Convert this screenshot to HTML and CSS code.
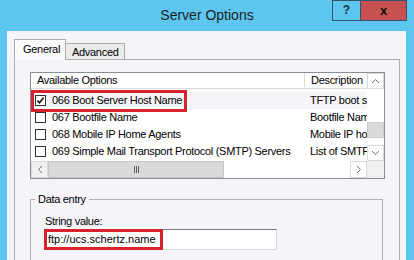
FILE: index.html
```html
<!DOCTYPE html>
<html lang="en">
<head>
  <meta charset="UTF-8">
  <title>Server Options</title>
  <link rel="stylesheet" href="styles.css">
</head>
<body>

  <div class="titlebar">
    <span></span>
    <div class="title">Server Options</div>
    <div class="controls">
      <span class="btn-help">?</span>
      <span class="btn-close">x</span>
    </div>
  </div>

  <div class="client">
    <div class="tabs">
      <div class="tab active">General</div>
      <div class="tab">Advanced</div>
    </div>

    <div class="panel">
      <div class="list">
        <div class="list-main">
          <div class="list-head">
            <div class="col-name">Available Options</div>
            <div class="col-desc">Description</div>
          </div>
          <div class="rows">
            <div class="row current">
              <div class="col-name">
                <span class="mark-row">
                  <span class="check on">
                    <svg width="9" height="9" viewBox="0 0 9 9"><polyline points="1.5,4.5 3.5,6.8 7.6,1.8" fill="none" stroke="#111" stroke-width="1.6"/></svg>
                  </span>
                  066 Boot Server Host Name
                </span>
              </div>
              <div class="col-desc">TFTP boot server host name</div>
            </div>
            <div class="row">
              <div class="col-name"><span class="check"></span>067 Bootfile Name</div>
              <div class="col-desc">Bootfile Name</div>
            </div>
            <div class="row">
              <div class="col-name"><span class="check"></span>068 Mobile IP Home Agents</div>
              <div class="col-desc">Mobile IP home agents</div>
            </div>
            <div class="row">
              <div class="col-name"><span class="check"></span>069 Simple Mail Transport Protocol (SMTP) Servers</div>
              <div class="col-desc">List of SMTP servers</div>
            </div>
          </div>
        </div>

        <div class="vscroll">
          <div class="sb-btn">
            <svg width="9" height="6" viewBox="0 0 9 6"><polyline points="1,5 4.5,1.5 8,5" fill="none" stroke="#707070" stroke-width="1"/></svg>
          </div>
          <div class="vtrack"><div class="vthumb"></div></div>
          <div class="sb-btn">
            <svg width="9" height="6" viewBox="0 0 9 6"><polyline points="1,1 4.5,4.5 8,1" fill="none" stroke="#707070" stroke-width="1"/></svg>
          </div>
        </div>

        <div class="hscroll">
          <div class="sb-btn left">
            <svg width="6" height="9" viewBox="0 0 6 9"><polyline points="5,1 1.5,4.5 5,8" fill="none" stroke="#707070" stroke-width="1"/></svg>
          </div>
          <div class="hthumb">
            <svg width="7" height="7" viewBox="0 0 7 7"><path d="M1.5 0v7M3.5 0v7M5.5 0v7" stroke="#606060" stroke-width="1"/></svg>
          </div>
          <div class="htrack"></div>
          <div class="sb-btn right">
            <svg width="6" height="9" viewBox="0 0 6 9"><polyline points="1,1 4.5,4.5 1,8" fill="none" stroke="#707070" stroke-width="1"/></svg>
          </div>
        </div>
        <div class="corner"></div>
      </div>

      <fieldset class="group">
        <legend>Data entry</legend>
        <div class="group-body">
          <div class="field-label">String value:</div>
          <div class="textbox"><span class="mark-value">ftp://ucs.schertz.name</span></div>
        </div>
      </fieldset>
    </div>
  </div>

</body>
</html>
```

FILE: styles.css
```css
body {
  margin: 0;
  width: 414px;
  height: 260px;
  overflow: hidden;
  background-color: #5cc6ee;
  font-family: "Liberation Sans", Arial, sans-serif;
  color: #000;
}

/* title bar */

.titlebar {
  display: grid;
  grid-template-columns: 1fr auto 1fr;
  height: 31px;
  padding: 0 7px;
}

.title {
  font-size: 14px;
  line-height: 30px;
  color: #1e1e1e;
}

.controls {
  justify-self: end;
  display: flex;
  height: 21px;
}

.btn-help, .btn-close {
  box-sizing: border-box;
  height: 21px;
  border: 1px solid #34536b;
  font-weight: bold;
  text-align: center;
  line-height: 19px;
}

.btn-help {
  width: 29px;
  font-size: 12px;
  color: #15324a;
}

.btn-close {
  width: 46px;
  border-left: none;
  background-color: #c75050;
  font-size: 13px;
  color: #111;
}

/* window body */

.client {
  box-sizing: border-box;
  height: 229px;
  margin: 0 8px 0 7px;
  padding: 8px 0 0 7px;
  background-color: #f5f3f7;
  overflow: hidden;
  font-size: 11px;
  letter-spacing: -0.3px;
}

.tabs {
  display: flex;
  align-items: flex-end;
}

.tab {
  box-sizing: border-box;
  width: 59px;
  height: 16px;
  padding: 2px 0 0 6px;
  line-height: 13px;
  border: 1px solid #acacac;
  border-left: none;
  border-bottom: none;
  background-color: #ececec;
}

.tab.active {
  position: relative;
  z-index: 1;
  width: 52px;
  height: 21px;
  margin-bottom: -1px;
  padding: 3px 0 0 8px;
  border-left: 1px solid #acacac;
  background-color: #fbfafc;
}

.panel {
  box-sizing: border-box;
  width: 386px;
  height: 240px;
  padding: 12px 14px 0 15px;
  border: 1px solid #adadad;
  background-color: #f6f4f8;
}

/* options list */

.list {
  display: grid;
  grid-template-columns: 336px 17px;
  grid-template-rows: 88px 17px;
  border: 1px solid #8a8d93;
  background-color: #fff;
}

.list-main {
  display: flex;
  flex-direction: column;
}

.list-head {
  display: flex;
  height: 15px;
  line-height: 15px;
  border-bottom: 1px solid #dcdcdc;
}

.col-name {
  width: 273px;
  padding-left: 6px;
  box-sizing: border-box;
  display: flex;
  align-items: center;
  white-space: nowrap;
}

.col-desc {
  flex: 1;
  padding-left: 6px;
  white-space: nowrap;
  overflow: hidden;
}

.list-head .col-desc {
  border-left: 1px solid #dcdcdc;
}

.rows {
  padding-top: 3px;
}

.row {
  display: flex;
  height: 17px;
  line-height: 17px;
}

.row.current {
  background-color: #f6f4f8;
}

.row .col-name {
  padding-left: 4px;
}

.check {
  box-sizing: border-box;
  width: 11px;
  height: 11px;
  margin-right: 6px;
  border: 1px solid #333;
  background-color: #fff;
  display: flex;
  align-items: center;
  justify-content: center;
  flex-shrink: 0;
}

.mark-row {
  display: inline-flex;
  align-items: center;
  box-sizing: border-box;
  height: 22px;
  margin-left: -4px;
  padding: 0 2px 0 1px;
  border: 3px solid #d7222e;
}

/* scrollbars */

.vscroll {
  display: flex;
  flex-direction: column;
  background-color: #fff;
}

.sb-btn {
  box-sizing: border-box;
  height: 16px;
  display: flex;
  align-items: center;
  justify-content: center;
  border: 1px solid #dadada;
  background-color: #fff;
}

.vtrack {
  flex: 1;
  padding-top: 33px;
}

.vthumb {
  height: 16px;
  background-color: #dadada;
  border: 1px solid #cdcdcd;
  box-sizing: border-box;
}

.hscroll {
  display: flex;
  background-color: #fff;
}

.hscroll .sb-btn {
  width: 17px;
  height: 17px;
}

.hscroll .sb-btn.left {
  background-color: #f0f0f0;
}

.hthumb {
  box-sizing: border-box;
  width: 176px;
  display: flex;
  align-items: center;
  justify-content: center;
  background-color: #dadada;
  border: 1px solid #c6c6c6;
}

.htrack {
  flex: 1;
}

.corner {
  background-color: #f0f0f0;
}

/* data entry */

.group {
  margin: 14px 2px 0 0;
  padding: 0;
  border: 1px solid #b4b4b4;
  height: 80px;
}

.group legend {
  margin-left: 4px;
  padding: 0 3px;
  line-height: 13px;
}

.group-body {
  padding: 8px 0 0 13px;
}

.field-label {
  padding-left: 1px;
  line-height: 14px;
}

.textbox {
  display: flex;
  box-sizing: border-box;
  width: 233px;
  height: 21px;
  margin-top: 1px;
  border: 1px solid #d8d8d8;
  border-top-color: #7a7a7a;
  background-color: #fff;
  letter-spacing: 0;
}

.mark-value {
  box-sizing: border-box;
  height: 21px;
  margin: -1px 0 0 -1px;
  padding: 0 4px 0 1px;
  line-height: 15px;
  border: 3px solid #d7222e;
}
```
